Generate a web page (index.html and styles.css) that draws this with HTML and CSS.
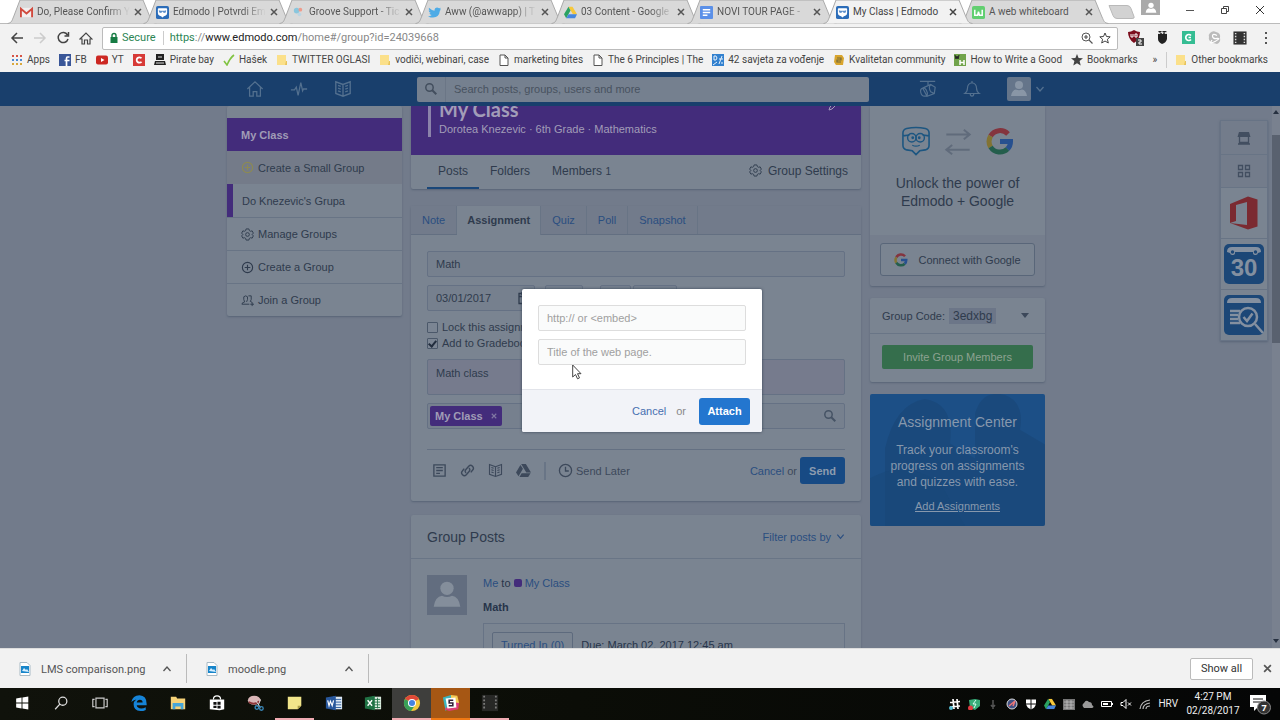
FILE: index.html
```html
<!DOCTYPE html>
<html lang="en">
<head>
<meta charset="utf-8">
<title>My Class | Edmodo</title>
<link rel="stylesheet" href="styles.css">
</head>
<body>
<svg class="defs" aria-hidden="true">
  <symbol id="tabshape" viewBox="0 0 150 24" preserveAspectRatio="none"><path d="M.5 23.500C5 23 5 20 6.500 17L13 0H136L143 17C145 21 145 23 149.500 23.500"/></symbol>
  <symbol id="x" viewBox="0 0 8 8"><path d="M1 1l6 6M7 1L1 7" fill="none" stroke="currentColor" stroke-width="1.500"/></symbol>
  <symbol id="folder" viewBox="0 0 12 12"><path d="M1 1h9v10H1z" fill="#fbe08a"/><path d="M10 7h1v4h-2z" fill="#e8c35d"/></symbol>
  <symbol id="page" viewBox="0 0 12 12"><path d="M2 1h5l3 3v7.500H2zM7 1v3h3" fill="#fff" stroke="#555"/></symbol>
  <symbol id="edmodo" viewBox="0 0 14 14"><rect width="14" height="14" rx="2" fill="#2b6cb8"/><path d="M3 2.500h8q1 0 1 1v4q0 2-2 3l-1.500.5L7 12.500 5.500 11 4 10.500q-2-1-2-3v-4q0-1 1-1z" fill="#fff"/><path d="M3 4.500l2 .5h4l2-.5-.5 2.500-2 .5L7 6l-1.500 1.500-2-.5z" fill="#5c8fcb"/></symbol>
  <symbol id="gear" viewBox="0 0 14 14"><path d="M5.500 1h3l.5 1.800 1.200.7 1.800-.4 1.300 2.400L12 7l1.300 1.500-1.300 2.400-1.800-.4-1.200.7-.5 1.800h-3L5 11.200l-1.200-.7-1.800.4L.7 8.500 2 7 .7 5.500 2 3.100l1.800.4L5 2.800z" fill="none" stroke="currentColor"/><circle cx="7" cy="7" r="2" fill="none" stroke="currentColor"/></symbol>
  <symbol id="plus" viewBox="0 0 14 14"><circle cx="7" cy="7" r="5.500" fill="none" stroke="currentColor" stroke-width="1.200"/><path d="M7 4v6M4 7h6" stroke="currentColor" stroke-width="1.200"/></symbol>
  <symbol id="book" viewBox="0 0 20 20"><path d="M10 5L2 2v13l8 3 8-3V2zM10 5v13M4.500 6l3 1.100M4.500 9l3 1.100M4.500 12l3 1.100M15.500 6l-3 1.100M15.500 9l-3 1.100M15.500 12l-3 1.100" fill="none" stroke="currentColor" stroke-width="1.500"/></symbol>
  <symbol id="search" viewBox="0 0 14 14"><circle cx="5.500" cy="5.500" r="3.700" fill="none" stroke="currentColor" stroke-width="1.500"/><path d="M8.300 8.300l4 4" stroke="currentColor" stroke-width="2"/></symbol>
  <symbol id="down" viewBox="0 0 10 10"><path d="M1.500 3l3.500 4 3.500-4" fill="none" stroke="currentColor" stroke-width="1.300"/></symbol>
  <symbol id="person" viewBox="0 0 24 24"><circle cx="12" cy="8" r="4" fill="currentColor"/><path d="M4 19q1-6 5-6.500q3 1.500 6 0q4 .5 5 6.500z" fill="currentColor"/></symbol>
  <symbol id="google" viewBox="0 0 28 28"><path d="M4.600 8.500A11 11 0 0 1 22 6.500" fill="none" stroke="#84343e" stroke-width="5"/><path d="M4.600 8.500a11 11 0 0 0 0 11" fill="none" stroke="#827333" stroke-width="5"/><path d="M4.600 19.500A11 11 0 0 0 21.500 21.500" fill="none" stroke="#245e4c" stroke-width="5"/><path d="M21.500 21.500Q24.500 18.500 24.500 14H14" fill="none" stroke="#27508f" stroke-width="5"/></symbol>
  <symbol id="drive" viewBox="0 0 16 14"><path d="M5.500 0h5L16 9h-5z" fill="#f7c83a"/><path d="M5.500 0L8 4.500 2.700 14 0 9z" fill="#2aa262"/><path d="M5.500 9H16l-2.500 5H2.700z" fill="#4687df"/></symbol>
  <symbol id="image" viewBox="0 0 12 14"><path d="M1 .5h7l3 3v10H1z" fill="#fff" stroke="#a8bac5"/><path d="M2 4h8v7H2z" fill="#1685ca"/><path d="M3 9l2-3 2 2 1-1 2 3" fill="#d5eeff"/></symbol>
  <symbol id="film" viewBox="0 0 20 20"><path d="M1 1h18v18H1z" fill="currentColor"/><path d="M3.500 2v16M16.500 2v16" stroke="#aaa" stroke-width="2" stroke-dasharray="2 2"/></symbol>
</svg>

<header class="browser">
  <div class="tabs">
    <div class="tab"><svg class="shape"><use href="#tabshape"/></svg><svg class="fav" viewBox="0 0 14 14"><path d="M0 2h14v10H0z" fill="#f2eeee"/><path d="M1 12V3l6 5 6-5v9" fill="none" stroke="#d14a3e" stroke-width="2"/></svg><span>Do, Please Confirm Y</span><button aria-label="Close tab"><svg><use href="#x"/></svg></button></div>
    <div class="tab"><svg class="shape"><use href="#tabshape"/></svg><svg class="fav"><use href="#edmodo"/></svg><span>Edmodo | Potvrdi Em</span><button aria-label="Close tab"><svg><use href="#x"/></svg></button></div>
    <div class="tab"><svg class="shape"><use href="#tabshape"/></svg><svg class="fav" viewBox="0 0 14 14"><circle cx="5" cy="5" r="3" fill="#8ac6dd"/><circle cx="9" cy="4" r="2" fill="#ef9b8b"/><circle cx="8" cy="9" r="2" fill="#bcd5e3"/></svg><span>Groove Support - Tic</span><button aria-label="Close tab"><svg><use href="#x"/></svg></button></div>
    <div class="tab"><svg class="shape"><use href="#tabshape"/></svg><svg class="fav" viewBox="0 0 14 14"><path d="M1 2q3 3 6 3 0-3.500 3-3.500l2 .8 2-.5-1.200 1.700 1.200.2-1.200 1.300Q12 12 5.500 12.500 3 12.500 0 11.200q2.500 0 4-1.400-2-.5-2.500-2L3 7.600Q.8 6.500.7 4.800l1.200.3Q.2 3.500 1 2z" fill="#4eabe6"/></svg><span>Aww (@awwapp) | T</span><button aria-label="Close tab"><svg><use href="#x"/></svg></button></div>
    <div class="tab"><svg class="shape"><use href="#tabshape"/></svg><svg class="fav"><use href="#drive"/></svg><span>03 Content - Google</span><button aria-label="Close tab"><svg><use href="#x"/></svg></button></div>
    <div class="tab"><svg class="shape"><use href="#tabshape"/></svg><svg class="fav" viewBox="0 0 14 14"><rect width="14" height="14" rx="1" fill="#5b90e8"/><path d="M3 4h8M3 7h8M3 10h5" stroke="#fff" stroke-width="1.500"/></svg><span>NOVI TOUR PAGE -</span><button aria-label="Close tab"><svg><use href="#x"/></svg></button></div>
    <div class="tab active"><svg class="shape"><use href="#tabshape"/></svg><svg class="fav"><use href="#edmodo"/></svg><span>My Class | Edmodo</span><button aria-label="Close tab"><svg><use href="#x"/></svg></button></div>
    <div class="tab whole"><svg class="shape"><use href="#tabshape"/></svg><svg class="fav" viewBox="0 0 14 14"><rect width="14" height="14" rx="2" fill="#62cf70"/><path d="M3 4v6h3l1-4 1 4h3V4" fill="none" stroke="#fff" stroke-width="1.600"/></svg><span>A web whiteboard</span><button aria-label="Close tab"><svg><use href="#x"/></svg></button></div>
    <button class="newtab" aria-label="New tab"><svg viewBox="0 0 28 14"><path d="M1 .5h18q3 0 4 3l3 8q1 2-2 2H9q-3 0-4-3z" fill="#d2d2d2" stroke="#b9b9b9"/></svg></button>
    <div class="winbtns">
      <button class="user" aria-label="Profile"><svg viewBox="0 0 24 24"><use href="#person"/></svg></button>
      <button aria-label="Minimize"><svg viewBox="0 0 10 10"><path d="M1 5.500h8" stroke="#555"/></svg></button>
      <button aria-label="Restore"><svg viewBox="0 0 10 10"><path d="M1.500 3.500h5v5h-5zM3.500 3V1.500h5v5H7" fill="none" stroke="#444"/></svg></button>
      <button aria-label="Close"><svg viewBox="0 0 10 10"><path d="M1 1l8 8M9 1L1 9" stroke="#333"/></svg></button>
    </div>
  </div>
  <div class="toolbar">
    <button aria-label="Back"><svg viewBox="0 0 14 14"><path d="M13 7H2M7 2L2 7l5 5" fill="none" stroke="#444" stroke-width="1.500"/></svg></button>
    <button aria-label="Forward"><svg viewBox="0 0 14 14"><path d="M1 7h11M7 2l5 5-5 5" fill="none" stroke="#ccc" stroke-width="1.500"/></svg></button>
    <button aria-label="Reload"><svg viewBox="0 0 14 14"><path d="M11.500 4A5 5 0 1 0 12 8M12.500 1v4h-4" fill="none" stroke="#444" stroke-width="1.500"/></svg></button>
    <button aria-label="Home"><svg viewBox="0 0 14 14"><path d="M1 8l6-6 6 6h-2v5H8.500V9h-3v4H3V8z" fill="none" stroke="#444" stroke-width="1.200"/></svg></button>
    <div class="url">
      <svg viewBox="0 0 10 12"><path d="M1.500 5h7v6h-7z" fill="#177c44"/><path d="M3 5V3.500a2 2 0 0 1 4 0V5" fill="none" stroke="#177c44" stroke-width="1.400"/></svg>
      <span class="secure">Secure</span>
      <span class="address"><b>https</b>://<i>www.edmodo.com</i>/home#/group?id=24039668</span>
      <svg class="r" viewBox="0 0 12 12"><circle cx="5" cy="5" r="4" fill="none" stroke="#555"/><path d="M8 8l3.500 3.500M3 5h4M5 3v4" stroke="#555" stroke-width="1.200"/></svg>
      <svg class="r" viewBox="0 0 12 12"><path d="M6 1l1.500 3.500 3.700.3-2.800 2.500.9 3.700L6 9l-3.300 2 .9-3.700L.8 4.800l3.700-.3z" fill="none" stroke="#444"/></svg>
    </div>
    <div class="exts">
      <svg viewBox="0 0 18 16"><path d="M7 0q3 2 6 2 0 7-6 11Q1 9 1 2q3 0 6-2z" fill="#7c0e1d"/><path d="M4 4v3h2V4M8 4h2v3H8z" stroke="#fff" fill="none"/><path d="M9 8h8v8H9z" fill="#444"/><path d="M11 10h3v2h-2v2h3" stroke="#fff" fill="none"/></svg>
      <svg viewBox="0 0 18 16"><path d="M5 1h9v8q-1 4-5 5-4-2-4-5z" fill="#222"/><path d="M5 1l2 2 2-2 2 2 3-2v3H5z" fill="#ddd"/><circle cx="8" cy="4" r="1" fill="#222"/><circle cx="11" cy="4" r="1" fill="#222"/></svg>
      <svg viewBox="0 0 18 16"><path d="M3 1h13v13H3z" fill="#35bd93"/><path d="M12 5.500a3 3 0 1 0 0 4M9.500 7.500H12" fill="none" stroke="#fff" stroke-width="1.700"/></svg>
      <svg viewBox="0 0 18 16"><path d="M5 3q3-3 6-1 5 1 4 6 1 4-3 6-3-1-5-1-4-3-3-6-1-2 1-4z" fill="#bbb"/><path d="M12 5.500Q7.500 3 7.500 6t4.500 2.500-2 3-3-1.500" fill="none" stroke="#fff" stroke-width="1.300"/></svg>
      <svg viewBox="0 0 22 22"><path d="M2 2h18v18H2z" fill="#333"/><path d="M5 4v15M17 4v15" stroke="#ddd" stroke-width="2" stroke-dasharray="2 2"/></svg>
      <svg viewBox="0 0 18 16"><path d="M9 2v2M9 7v2M9 12v2" stroke="#555" stroke-width="2"/></svg>
    </div>
  </div>
  <nav class="bookmarks">
    <a href="#"><svg viewBox="0 0 12 12"><path d="M1 2h10" stroke="#d65345" stroke-width="2" stroke-dasharray="2 2"/><path d="M1 6h10" stroke="#4a8ad6" stroke-width="2" stroke-dasharray="2 2"/><path d="M1 10h10" stroke="#d9a83d" stroke-width="2" stroke-dasharray="2 2"/></svg><span>Apps</span></a>
    <a href="#"><svg viewBox="0 0 12 12"><path d="M0 0h12v12H0z" fill="#395698"/><path d="M10.500 3H8.500Q7.500 3 7.500 4.500V12M5.500 6.500h5" fill="none" stroke="#fff" stroke-width="1.700"/></svg><span>FB</span></a>
    <a href="#"><svg viewBox="0 0 12 12"><rect y="1.500" width="12" height="9" rx="2" fill="#cc2722"/><path d="M5 4l3.500 2L5 8z" fill="#fff"/></svg><span>YT</span></a>
    <a href="#" aria-label="C"><svg viewBox="0 0 12 12"><path d="M0 0h12v12H0z" fill="#d73a37"/><path d="M8.500 4.300a2.700 2.700 0 1 0 0 3.400" fill="none" stroke="#fff" stroke-width="1.800"/></svg></a>
    <a href="#"><svg viewBox="0 0 12 12"><path d="M2 0h8v6H2zM1 7h10l1 4H0z" fill="#222"/><path d="M4 3h4M2 9h8" stroke="#ddd"/></svg><span>Pirate bay</span></a>
    <a href="#"><svg viewBox="0 0 12 12"><path d="M1 7l3 4Q7 4 11 1" fill="none" stroke="#80c342" stroke-width="1.600"/></svg><span>Hašek</span></a>
    <a href="#"><svg><use href="#folder"/></svg><span>TWITTER OGLASI</span></a>
    <a href="#"><svg><use href="#folder"/></svg><span>vodiči, webinari, case</span></a>
    <a href="#"><svg><use href="#page"/></svg><span>marketing bites</span></a>
    <a href="#"><svg><use href="#page"/></svg><span>The 6 Principles | The</span></a>
    <a href="#"><svg viewBox="0 0 12 12"><path d="M0 0h12v12H0z" fill="#3281cf"/><path d="M2 6V2h2q2 2 0 4zM7 10l3-8M1 11l4-3M7 5h4M9 9h2" fill="none" stroke="#e8f2fb"/></svg><span>42 savjeta za vođenje</span></a>
    <a href="#"><svg viewBox="0 0 12 12"><path d="M2 1h7l2 3-1 7H3L1 8z" fill="#d9a52d"/><path d="M4 4h4v2H4v2h4" stroke="#756c3c" fill="none" stroke-width="1.200"/></svg><span>Kvalitetan community</span></a>
    <a href="#"><svg viewBox="0 0 12 12"><path d="M0 0h12v12H0z" fill="#71a34b"/><path d="M1 1l1 4 1-3 1 3 1-4" fill="none" stroke="#222"/><path d="M6 6v5M10 6v5M6 8.500h4" stroke="#fff" stroke-width="1.500"/></svg><span>How to Write a Good</span></a>
    <a href="#"><svg viewBox="0 0 12 12"><path d="M6 0l1.600 4 4.400.3-3.400 2.800L9.700 11.500 6 9.200l-3.700 2.300 1.100-4.400L0 4.300 4.400 4z" fill="#444"/></svg><span>Bookmarks</span></a>
    <a class="more" href="#">»</a>
    <a class="other" href="#"><svg><use href="#folder"/></svg><span>Other bookmarks</span></a>
  </nav>
</header>

<main class="page">
  <header class="topbar">
    <div class="topbar-in">
      <nav class="topnav">
        <a href="#" aria-label="Home"><svg viewBox="0 0 20 20"><path d="M1.500 10L10 2l8.500 8M4 8v10h4v-5h4v5h4V8" fill="none" stroke="currentColor" stroke-width="1.400"/></svg></a>
        <a href="#" aria-label="Progress"><svg viewBox="0 0 20 20"><path d="M1 11h4l2-3 2 9 3-14 2 9 1-2h4" fill="none" stroke="currentColor" stroke-width="1.400"/></svg></a>
        <a href="#" aria-label="Library"><svg><use href="#book"/></svg></a>
      </nav>
      <form class="search"><button type="button" aria-label="Search"><svg><use href="#search"/></svg></button><input type="search" aria-label="Search Edmodo" placeholder="Search posts, groups, users and more"></form>
      <div class="account">
        <button aria-label="Launcher"><svg viewBox="0 0 20 20"><path d="M1 1.500h17M10 1.500v4M4 9l9-4 5 3-1 7-8 3zM4 9q-3 1-2 5t4 4l3 0q1-4-1-7t-4-2zM13 5q-3 3 0 8l4 2" fill="none" stroke="currentColor" stroke-width="1.300"/></svg></button>
        <button aria-label="Notifications"><svg viewBox="0 0 20 20"><path d="M2 15q3-2 3-6 0-5 5-6 5 1 5 6 0 4 3 6zM8 15q0 3 2 3t2-3M10 1v2" fill="none" stroke="currentColor" stroke-width="1.300"/></svg></button>
        <button class="me" aria-label="Account"><svg class="face"><use href="#person"/></svg><svg class="chev"><use href="#down"/></svg></button>
      </div>
    </div>
  </header>

  <div class="scroller">
    <div class="columns">
      <aside class="left card">
        <div class="cut"></div>
        <a class="current" href="#">My Class</a>
        <a class="small" href="#"><svg class="gold"><use href="#plus"/></svg>Create a Small Group</a>
        <a class="group" href="#">Do Knezevic's Grupa</a>
        <a class="row" href="#"><svg><use href="#gear"/></svg>Manage Groups</a>
        <a class="row" href="#"><svg><use href="#plus"/></svg>Create a Group</a>
        <a class="row" href="#"><svg viewBox="0 0 14 14"><path d="M1 11q0-2 3-2.500L3 6V3l2-1 2 1v3L6 8.500M8 2h3v4l-1 2 2 1M1 11h8M10 11h4M12 9v4" fill="none" stroke="currentColor"/></svg>Join a Group</a>
      </aside>

      <div class="middle">
        <section class="card banner">
          <div class="cover"><div class="cover-in"><h1>My Class</h1><p>Dorotea Knezevic · 6th Grade · Mathematics</p></div><svg class="edit" viewBox="0 0 10 10"><path d="M1 9l1-3 5-5 2 2-5 5z" fill="none" stroke="currentColor"/></svg></div>
          <nav class="grouptabs"><a class="on" href="#">Posts</a><a href="#">Folders</a><a href="#">Members <small>1</small></a><a class="settings" href="#"><svg><use href="#gear"/></svg>Group Settings</a></nav>
        </section>

        <section class="card composer">
          <nav class="kinds"><a href="#">Note</a><a class="on" href="#">Assignment</a><a href="#">Quiz</a><a href="#">Poll</a><a href="#">Snapshot</a></nav>
          <form class="fields">
            <input class="field" aria-label="Assignment title" value="Math">
            <div class="when"><div class="field date"><input aria-label="Due date" value="03/01/2017"><svg viewBox="0 0 14 14"><path d="M1 2.500h12v10H1zM1 5.500h12M4 1v3M10 1v3M4 8h2M8 8h2M4 10.500h2" fill="none" stroke="currentColor" stroke-width="1.300"/></svg></div><span class="field t1"></span><span class="field t2"></span><span class="field t3"></span></div>
            <div class="checks"><label><input type="checkbox">Lock this assignment after its due date</label><label><input type="checkbox" checked>Add to Gradebook</label></div>
            <textarea class="field desc" aria-label="Description">Math class</textarea>
            <div class="field to"><span class="chip">My Class <button type="button" aria-label="Remove"><svg><use href="#x"/></svg></button></span><svg class="mag"><use href="#search"/></svg></div>
            <footer class="actions">
              <button type="button" aria-label="Attach file"><svg viewBox="0 0 16 16"><path d="M2 2h12v12H2zM4.500 5h7M4.500 8h7M4.500 11h4" fill="none" stroke="currentColor" stroke-width="1.400"/></svg></button>
              <button type="button" aria-label="Attach link"><svg viewBox="0 0 16 16"><path d="M6.500 10.500q-2-1.500-.2-3.500l3-3.500q2-2 4 0t.2 4L11.500 10M9.500 5.500q2 1.500.2 3.500l-3 3.500q-2 2-4 0t-.2-4L4.500 6" fill="none" stroke="currentColor" stroke-width="1.500"/></svg></button>
              <button type="button" aria-label="Attach from Library"><svg><use href="#book"/></svg></button>
              <button type="button" aria-label="Attach from Drive"><svg viewBox="0 0 16 14"><path d="M5.500 0h5L16 9h-5zM4.700 1L7.400 5 2.700 13 0 9zM6 10h9.500L13 14H3.700z" fill="currentColor"/></svg></button>
              <button type="button" class="later"><svg viewBox="0 0 16 16"><circle cx="8" cy="8" r="6.500" fill="none" stroke="currentColor" stroke-width="1.400"/><path d="M8 4v4.500h3.500" fill="none" stroke="currentColor" stroke-width="1.400"/></svg>Send Later</button>
              <span class="end"><a href="#">Cancel</a> or</span><button type="button" class="primary dim">Send</button>
            </footer>
          </form>
        </section>

        <section class="card posts">
          <header><h2>Group Posts</h2><button>Filter posts by <svg><use href="#down"/></svg></button></header>
          <article><svg class="avatar" viewBox="0 0 24 24"><use href="#person"/></svg>
            <div class="post"><p><a href="#">Me</a> to <i></i> <a href="#">My Class</a></p><h3>Math</h3>
              <div class="work"><button>Turned In (0)</button><span>Due: March 02, 2017 12:45 am</span></div></div>
          </article>
        </section>
      </div>

      <aside class="right">
        <section class="card promo">
          <div class="promo-top">
            <div class="logos"><svg viewBox="0 0 30 32"><path d="M5 2Q15 0 25 2q4 1 4 5v13q0 4-4 5l-6 1-4 4-4-4-6-1q-4-1-4-5V7q0-4 4-5zM1 10l7-1M22 9l7 1" fill="none" stroke="#1d5681" stroke-width="1.700"/><circle cx="10.500" cy="12" r="4.500" fill="none" stroke="#1d5681" stroke-width="1.500"/><circle cx="19.500" cy="12" r="4.500" fill="none" stroke="#1d5681" stroke-width="1.500"/><circle cx="11.500" cy="12" r="1.500" fill="#1d5681"/><circle cx="18.500" cy="12" r="1.500" fill="#1d5681"/><path d="M11 20q4 2 8 0" fill="none" stroke="#1d5681" stroke-width="1.300"/></svg>
            <svg class="swap" viewBox="0 0 24 24"><path d="M2 6h20M17 2l5 4-5 4M22 19H2M7 15l-5 4 5 4" fill="none" stroke="#606b7b" stroke-width="1.700"/></svg>
            <svg><use href="#google"/></svg></div>
            <p>Unlock the power of<br>Edmodo + Google</p>
          </div>
          <button class="connect"><svg><use href="#google"/></svg>Connect with Google</button>
        </section>
        <section class="card code"><div class="coderow"><span>Group Code:</span><b>3edxbg</b><button aria-label="Code options"></button></div><button class="invite">Invite Group Members</button></section>
        <section class="center"><svg class="photo" viewBox="0 0 175 133" preserveAspectRatio="none"><path d="M15 133V55Q25 10 55 5q30 5 25 45l25 15V20Q112-5 135 1q20 8 15 35l25 15v82z" fill="#183f6b" opacity=".35"/><path d="M0 85q35-20 70 5l25 43H0z" fill="#174778" opacity=".5"/></svg><div><h2>Assignment Center</h2><p>Track your classroom's<br>progress on assignments<br>and quizzes with ease.</p><a href="#">Add Assignments</a></div></section>
      </aside>
    </div>
    <div class="scrollbar"><i class="up"></i><i class="thumb"></i><i class="dn"></i></div>

    <aside class="dock">
      <button class="s" aria-label="Store"><svg viewBox="0 0 14 14"><path d="M2 1h10l1.500 5h-13z" fill="currentColor"/><path d="M2.500 6v5.500h9V6M1 13h12" fill="none" stroke="currentColor" stroke-width="1.300"/></svg></button>
      <button class="s" aria-label="Apps"><svg viewBox="0 0 14 14"><path d="M1.500 1.500h4v4h-4zM8.500 1.500h4v4h-4zM1.500 8.500h4v4h-4zM8.500 8.500h4v4h-4z" fill="none" stroke="currentColor" stroke-width="1.300"/></svg></button>
      <button aria-label="Office"><svg viewBox="0 0 40 40"><path d="M6 11L24 3.500l9.500 3v27l-9.500 3L6 30l17 2V9L12 12v16l-6 2z" fill="#7b2a31"/></svg></button>
      <button aria-label="Planner"><svg viewBox="0 0 40 40"><rect width="40" height="40" rx="5" fill="#1c4777"/><path d="M3 8q0-5 5-5h24q5 0 5 5l-3 1a2.500 2.500 0 0 1-5-1H11a2.500 2.500 0 0 1-5 1z" fill="#8490a0"/><circle cx="8.500" cy="8" r="1.700" fill="#1c4777"/><circle cx="31.500" cy="8" r="1.700" fill="#1c4777"/><text x="20" y="32" text-anchor="middle">30</text></svg></button>
      <button aria-label="Snapshot"><svg viewBox="0 0 40 40"><rect width="40" height="40" rx="5" fill="#1c4777"/><path d="M3 8q0-5 5-5h24q5 0 5 5z" fill="#8490a0"/><circle cx="24" cy="22" r="9" fill="none" stroke="#8490a0" stroke-width="2.500"/><path d="M19.500 22l3.500 4 5.500-7.500M6 16h10M6 20h8M6 24h8M6 28h10M31 29l8 9" fill="none" stroke="#8490a0" stroke-width="2.500"/></svg></button>
    </aside>
  </div>

  <div class="overlay">
    <form class="modal" role="dialog" aria-label="Attach a link">
      <div class="modal-body"><input aria-label="Link" placeholder="http:// or &lt;embed&gt;"><input aria-label="Title" placeholder="Title of the web page."></div>
      <footer><a href="#">Cancel</a><span>or</span><button type="button" class="primary">Attach</button></footer>
      <svg class="cursor" viewBox="0 0 10 16"><path d="M.7 1v12l2.800-2.500 2 4.300 2-.9-2-4.200H9z" fill="#fff" stroke="#444"/></svg>
    </form>
  </div>
</main>

<section class="downloads">
  <div class="file"><svg><use href="#image"/></svg><span>LMS comparison.png</span><button aria-label="Options"><svg class="flip"><use href="#down"/></svg></button></div>
  <div class="file"><svg><use href="#image"/></svg><span>moodle.png</span><button aria-label="Options"><svg class="flip"><use href="#down"/></svg></button></div>
  <button class="showall">Show all</button><button class="dismiss" aria-label="Close downloads"><svg><use href="#x"/></svg></button>
</section>

<footer class="taskbar">
  <button aria-label="Start"><svg viewBox="0 0 20 20"><path d="M3.500 5l6-1v5.500h-6zM10.500 3.800l6.500-.9v6.600h-6.500zM3.500 10.500h6V16l-6-1zM10.500 10.500H17v6.600l-6.500-.9z" fill="#fff"/></svg></button>
  <button aria-label="Search"><svg viewBox="0 0 20 20"><circle cx="12" cy="8" r="4.500" fill="none" stroke="#ddd" stroke-width="1.400"/><path d="M9 11l-5.500 6" stroke="#ddd" stroke-width="1.400"/></svg></button>
  <button aria-label="Task view"><svg viewBox="0 0 20 20"><path d="M5.500 4.500h9v11h-9zM4 6H2v8h2M16 6h2v8h-2" fill="none" stroke="#ccc" stroke-width="1.300"/></svg></button>
  <button aria-label="Edge"><svg viewBox="0 0 20 20"><path d="M1.500 9Q3 1.500 10.500 1.500 18.500 2 18.500 11v1.500H7.500q.5 3.500 5 3.500 2.500 0 5-1.300v3q-2.500 1.300-6 1.300-7.500-.5-7.500-7.500 0-3.500 3-5.500-3.500.5-5.500 3zM7.500 9.500h6.500q0-3-3-3t-3.500 3z" fill="#1684d8"/></svg></button>
  <button aria-label="Explorer"><svg viewBox="0 0 20 20"><path d="M2 3h6l1 2h9v12H2z" fill="#f6d278"/><path d="M4 10h12v7h-3v-3H7v3H4z" fill="#46a6d9"/></svg></button>
  <button aria-label="Store"><svg viewBox="0 0 20 20"><path d="M2 6h16v11l-5 1-11-1z" fill="#fff"/><path d="M6 6q0-4 4-4t4 4" fill="none" stroke="#fff" stroke-width="1.300"/><path d="M6 9h3.500v3H6zM10.500 8.500H14V12h-3.500zM6 13h3.500v2.500H6zM10.500 13H14v3h-3.500z" fill="#111"/></svg></button>
  <button aria-label="Snipping tool"><svg viewBox="0 0 20 20"><ellipse cx="8" cy="7" rx="7" ry="5" fill="#d9b5b6"/><path d="M2 9q6 4 12-1" stroke="#8f3539" fill="none" stroke-width="2"/><path d="M10 8l5 7M15 6l-3 8" stroke="#ddd"/><circle cx="16" cy="16" r="2" fill="none" stroke="#3886b7" stroke-width="1.500"/><circle cx="11" cy="15" r="2" fill="none" stroke="#3886b7" stroke-width="1.500"/></svg></button>
  <button class="open" aria-label="Sticky notes"><svg viewBox="0 0 20 20"><path d="M2 3h15v10l-4 4H2z" fill="#f1e58a"/><path d="M17 13h-4v4z" fill="#a89d49"/></svg></button>
  <button aria-label="Word"><svg viewBox="0 0 20 20"><path d="M9 3h10v14H9z" fill="#dce8f4"/><path d="M11 6h7M11 9h7M11 12h7M11 15h7" stroke="#285a9d"/><path d="M1 4l11-2v16L1 16z" fill="#28579c"/><path d="M3 7l1.500 6L6 8l2 5 1.500-6" fill="none" stroke="#fff" stroke-width="1.300"/></svg></button>
  <button aria-label="Excel"><svg viewBox="0 0 20 20"><path d="M9 3h10v14H9z" fill="#dcecdf"/><path d="M11 6h7M11 9h7M11 12h7M11 15h7M15 4v12" stroke="#267449"/><path d="M1 4l11-2v16L1 16z" fill="#207244"/><path d="M4 7l5 6M9 7l-5 6" fill="none" stroke="#fff" stroke-width="1.500"/></svg></button>
  <button class="open lit" aria-label="Chrome"><svg viewBox="0 0 20 20"><circle cx="10" cy="10" r="9" fill="#f1c83b"/><path d="M10 10L2.200 5.500A9 9 0 0 1 17.800 5.500z" fill="#df4838"/><path d="M10 10L2.200 5.500A9 9 0 0 0 9 19l4-6z" fill="#389f58"/><circle cx="10" cy="10" r="4.500" fill="#fff"/><circle cx="10" cy="10" r="3.400" fill="#4583df"/></svg></button>
  <button class="slack" aria-label="Slack"><svg viewBox="0 0 20 20"><path d="M1 4l9-3 3 9-9 9z" fill="#3eb5bd"/><path d="M10 1l7 1 2 8-9 1z" fill="#f4cb56"/><path d="M3 17l8-8 8 1-1 7-10 2z" fill="#db3d77"/><path d="M4 5l11-1 1 11-10 1z" fill="#fff"/><path d="M12.500 7H8v3h4v3H7.500" fill="none" stroke="#312138" stroke-width="1.800"/></svg></button>
  <button class="open" aria-label="Video editor"><svg class="grey"><use href="#film"/></svg></button>
  <div class="tray">
    <svg viewBox="0 0 12 12"><path d="M4 1l1 10M8 1l1 10M1 4.500l10-1M1 9l10-1" stroke="#fff" stroke-width="1.700"/><circle cx="2" cy="10" r="2" fill="#55bdd3"/></svg>
    <svg viewBox="0 0 12 12"><path d="M1 2l6-1 5 1v6l-5 4-5-2z" fill="#38ad78"/><path d="M8 2L5 6h3l-2 4" fill="none" stroke="#d8fff0"/><circle cx="2.500" cy="10" r="2.500" fill="#e13c40"/></svg>
    <svg viewBox="0 0 12 12"><path d="M6 2v6M4 7q2 3 4 0M6 9v2" fill="none" stroke="#555" stroke-width="1.500"/></svg>
    <svg viewBox="0 0 12 12"><circle cx="6" cy="6" r="5" fill="#405184" stroke="#ddd"/><path d="M3 8l6-5-2 5" fill="none" stroke="#e77" stroke-width="1.500"/></svg>
    <svg viewBox="0 0 12 12"><path d="M1 1.500h10V6q-1 4-5 5.500Q2 10 1 6z" fill="#fff"/><path d="M6 1v11M1 6h10" stroke="#111"/></svg>
    <svg viewBox="0 0 16 14"><use href="#drive"/></svg>
    <svg viewBox="0 0 12 12"><path d="M0 1h12v11H0z" fill="#777"/><path d="M1 4h10M1 7h10M1 10h10M4 2v9M8 2v9" stroke="#ccc" stroke-width=".7"/></svg>
    <svg viewBox="0 0 12 12"><path d="M2 10Q-1 7 2 5q2-4 5-1 3 0 3 3 3 2 0 3z" fill="#999"/></svg>
    <svg viewBox="0 0 12 12"><path d="M.5 3.500h10v5H.5z" fill="none" stroke="#fff"/><path d="M2 5h5v2H2zM11 5h1v2h-1z" fill="#fff"/></svg>
    <svg viewBox="0 0 12 12"><path d="M1 4.500h2l3-3v9l-3-3H1zM8 4.500l3 3M11 4.500l-3 3" fill="none" stroke="#fff"/></svg>
    <svg viewBox="0 0 12 12"><path d="M1 11Q2 3 11 2M4 11Q4 6 11 5M7 11q0-3 4-3" fill="none" stroke="#bbb" stroke-width="1.200"/></svg>
    <span>HRV</span>
    <div class="clock">4:27 PM<br>02/28/2017</div>
    <svg class="notes" viewBox="0 0 24 22"><path d="M2 2h16v12h-8l-4 4v-4H2z" fill="#fff"/><path d="M5 6h10M5 9h10" stroke="#111"/><circle cx="16" cy="14.500" r="6.500" fill="#333" stroke="#888"/><text x="16" y="18" text-anchor="middle">7</text></svg>
  </div>
</footer>
</body>
</html>
```

FILE: styles.css
```css
* { box-sizing: border-box; }
body { margin: 0; height: 100vh; display: flex; flex-direction: column; overflow: hidden; font: 11px/16px "Liberation Sans", Arial, sans-serif; color: #2f3b4d; }
h1, h2, h3, p { margin: 0; font-weight: 400; }
a { color: inherit; text-decoration: none; }
button { border: 0; padding: 0; margin: 0; background: none; font: inherit; color: inherit; display: flex; align-items: center; justify-content: center; }
input, textarea { font: inherit; color: inherit; margin: 0; min-width: 0; }
svg { display: block; flex: none; }
.defs { position: absolute; width: 0; height: 0; }

/* browser chrome */
.browser { flex: none; background: #f2f2f2; font-family: Roboto, "Open Sans", sans-serif; font-size: 10px; color: #444; }
.tabs { height: 24px; display: flex; background: #fff; padding-left: 7px; box-shadow: inset 0 -1px #bbb; }
.tab { position: relative; flex: 0 1 150px; min-width: 0; margin-right: -14px; padding: 0 16px 0 13px; display: flex; align-items: center; gap: 4px; color: #555; }
.tab .shape { position: absolute; inset: 0; width: 100%; height: 100%; fill: #d9d9d9; stroke: #aaa; }
.tab.active { z-index: 1; color: #444; }
.tab.active .shape { fill: #f2f2f2; }
.tab .fav { position: relative; width: 13px; height: 13px; }
.tab span { position: relative; flex: 1; white-space: nowrap; mask-image: linear-gradient(90deg, #000 75%, transparent); }
.tab.active span, .tab.whole span { mask-image: none; }
.tab button { position: relative; width: 8px; }
.tab button svg { width: 8px; height: 8px; }
.newtab { margin-left: 13px; }
.newtab svg { width: 28px; height: 14px; }
.winbtns { margin-left: auto; display: flex; align-items: center; gap: 25px; padding-right: 15px; height: 20px; }
.winbtns svg { width: 10px; height: 10px; }
.winbtns .user { width: 19px; height: 15px; background: #aaa; color: #fff; align-self: flex-start; }
.winbtns .user svg { width: 16px; height: 16px; }
.toolbar { height: 26px; display: flex; align-items: center; padding: 2px 0 0 10px; gap: 9px; }
.toolbar > button svg { width: 14px; height: 14px; }
.url { flex: 1; min-width: 0; height: 23px; display: flex; align-items: center; background: #fff; border: 1px solid #bbb; border-radius: 2px; padding: 0 6px; font-size: 11px; }
.url svg { width: 10px; height: 12px; }
.url svg.r { width: 12px; height: 12px; margin-left: 6px; }
.secure { color: #2c8554; margin-left: 3px; padding-right: 7px; border-right: 1px solid #ccc; line-height: 14px; }
.address { color: #888; margin: 0 auto 0 6px; }
.address b { font-weight: 400; color: #2c8554; }
.address i { font-style: normal; color: #222; }
.exts { display: flex; gap: 8px; padding: 0 5px 0 0; }
.exts svg { width: 18px; height: 16px; }
.bookmarks { height: 22px; display: flex; align-items: center; gap: 9px; padding: 0 12px 2px 11px; white-space: nowrap; color: #444; }
.bookmarks a { display: flex; align-items: center; gap: 4px; flex: none; }
.bookmarks svg { width: 12px; height: 12px; }
.bookmarks .more { margin-left: auto; }
.bookmarks .other { border-left: 1px solid #ccc; padding-left: 8px; }

/* page */
.page { flex: 1; min-height: 0; display: flex; flex-direction: column; position: relative; background: #727b8b; }
.topbar { flex: none; background: #193f6c; color: #53708f; padding-right: 8px; }
.topbar-in { width: 818px; max-width: 100%; margin: 0 auto; height: 34px; display: flex; align-items: center; }
.topnav { display: flex; gap: 26px; padding-left: 19px; width: 190px; }
.topnav svg { width: 18px; height: 18px; }
.search { flex: 1; height: 25px; display: flex; background: #75808f; border-radius: 2px; color: #434e5e; }
.search button { width: 29px; border-right: 1px solid #6b7686; }
.search button svg { width: 14px; height: 14px; }
.search input { flex: 1; border: 0; background: none; padding: 0 8px; }
.search input::placeholder { color: #48525f; opacity: 1; }
.account { display: flex; align-items: center; gap: 26px; padding-left: 50px; width: 176px; }
.account svg { width: 18px; height: 18px; }
.account .me { gap: 4px; }
.account .me .face { width: 24px; height: 24px; background: #65758a; color: #8996a6; border-radius: 2px; }
.account .me .chev { width: 10px; height: 10px; }
.scroller { flex: 1; min-height: 0; overflow: hidden; position: relative; display: flex; }
.columns { flex: 1; display: grid; grid-template-columns: 175px 450px 175px; gap: 9px; justify-content: center; align-items: start; }
.card { background: #7a8491; border-radius: 2px; box-shadow: 0 1px 2px #586477; }
.left a { display: flex; align-items: center; gap: 4px; height: 33px; padding-left: 14px; }
.left svg { width: 13px; height: 13px; }
.left .cut { height: 12px; }
.left .current { background: #432c7b; color: #a09cb6; font-weight: 700; }
.left .small { background: #747b89; }
.left .gold { color: #8d8a52; }
.left .group { border-left: 6px solid #432c7b; padding-left: 9px; }
.left .row { border-top: 1px solid #687485; }
.cover { height: 49px; background: #432c7b; color: #a29db8; display: flex; justify-content: space-between; padding: 0 23px 18px 17px; }
.cover-in { align-self: flex-end; border-left: 3px solid #8b83aa; padding-left: 8px; }
.cover h1 { font: 700 20px/24px Lato, sans-serif; }
.edit { width: 10px; height: 10px; margin-top: -5px; }
.grouptabs { display: flex; padding: 0 13px 0 16px; height: 34px; font-size: 12px; }
.grouptabs a { padding: 8px 11px 0; }
.grouptabs .on { border-bottom: 2px solid #1a4779; }
.grouptabs small { font-size: 10px; }
.grouptabs .settings { margin-left: auto; padding-right: 0; display: flex; gap: 6px; }
.settings svg { width: 13px; height: 13px; margin-top: 1px; }
.composer { margin-top: 17px; }
.kinds { display: flex; height: 29px; background: #727b8b; border-bottom: 1px solid #636f81; color: #2a4e80; }
.kinds a { padding: 6px 11px; border-right: 1px solid #687485; height: 28px; }
.kinds .on { background: #7a8491; color: #2f3b4d; font-weight: 700; height: 29px; padding: 6px 10px; }
.fields { padding: 16px 16px 17px; }
.field { display: block; width: 100%; height: 26px; border: 1px solid #657184; border-radius: 2px; background: #76808e; padding: 0 8px; }
.when { display: flex; margin: 8px 0; }
.when .date { width: 108px; display: flex; align-items: center; padding-right: 2px; }
.date input { flex: 1; border: 0; background: none; padding: 0; }
.date svg { width: 14px; height: 14px; }
.when .t1 { width: 38px; margin-left: 10px; }
.when .t2 { width: 31px; margin-left: 17px; }
.when .t3 { width: 44px; margin-left: 2px; }
.checks label { display: flex; align-items: center; gap: 4px; height: 16px; }
.checks input { appearance: none; width: 11px; height: 11px; border: 1px solid #4b586a; border-radius: 1px; background: #7b8593; display: grid; place-items: center; }
.checks input:checked::after { content: ""; width: 3px; height: 6px; border: solid #222d3e; border-width: 0 2px 2px 0; transform: rotate(40deg); }
.desc { height: 36px; resize: none; overflow: hidden; margin: 8px 0; padding-top: 5px; background: #767b8d; }
.to { display: flex; align-items: center; justify-content: space-between; padding: 2px 7px 2px 2px; }
.chip { background: #432c7b; color: #a09cb6; font-weight: 700; height: 20px; padding: 0 5px; border-radius: 2px; display: flex; align-items: center; gap: 8px; }
.chip svg { width: 6px; height: 6px; color: #8178a3; }
.mag { width: 14px; height: 14px; color: #465365; }
.actions { display: flex; align-items: center; margin-top: 20px; padding: 7px 0 0 5px; border-top: 1px solid #647082; color: #3d495b; }
.actions button:not(.primary) { margin-right: 13px; }
.actions svg { width: 15px; height: 15px; }
.actions .later { gap: 3px; border-left: 2px solid #697586; padding-left: 12px; height: 18px; }
.actions .end { margin: 0 3px 0 auto; }
.actions .end a { color: #2a4e80; }
.primary { background: #2376cf; color: #fff; font-weight: 700; border-radius: 3px; width: 51px; height: 27px; }
.primary.dim { background: #174a84; color: #8d9caf; width: 45px; }
.posts { margin-top: 14px; }
.posts header { display: flex; justify-content: space-between; align-items: center; height: 44px; padding: 0 16px; border-bottom: 1px solid #697586; }
.posts h2 { font-size: 14px; }
.posts header button { color: #2a4e80; gap: 5px; }
.posts header svg { width: 9px; height: 9px; }
.posts article { display: flex; gap: 16px; padding: 16px; }
.avatar { width: 40px; height: 40px; background: #626d7f; color: #848e9b; }
.post { flex: 1; color: #27344a; }
.post a { color: #2a4e80; }
.post i { display: inline-block; width: 8px; height: 8px; background: #432c7b; border-radius: 2px; }
.post h3 { font: inherit; font-weight: 700; margin: 8px 0; }
.work { border: 1px solid #677385; padding: 8px; display: flex; gap: 8px; align-items: center; }
.work button { border: 1px solid #5d6a7d; border-radius: 2px; height: 26px; padding: 0 8px; color: #2a4e80; }
.right { display: grid; gap: 12px; }
.promo { padding-bottom: 10px; background: #757e8d; }
.promo-top { background: #7a8491; padding: 19px 10px 25px; text-align: center; font-size: 14px; line-height: 18px; height: 129px; }
.logos { display: flex; align-items: center; justify-content: center; gap: 14px; height: 32px; margin-bottom: 17px; }
.logos svg { width: 28px; height: 31px; }
.connect { width: 155px; height: 33px; margin: 8px auto 0; border: 1px solid #596679; border-radius: 3px; background: #7a8491; gap: 10px; }
.connect svg { width: 14px; height: 14px; }
.coderow { display: flex; align-items: center; height: 36px; padding: 0 16px 0 12px; border-bottom: 1px solid #697586; }
.coderow b { font-weight: 400; background: #6c7688; padding: 0 4px; margin-left: 4px; font-size: 12px; }
.coderow button { margin-left: auto; border: 4px solid transparent; border-top: 5px solid #3c485a; border-bottom: 0; }
.code { padding-bottom: 13px; }
.invite { width: 151px; height: 24px; margin: 11px auto 0; border-radius: 2px; background: #356e4c; color: #8da291; }
.center { position: relative; overflow: hidden; background: #1c4f86; color: #8798ad; border-radius: 2px; text-align: center; padding: 19px 0 12px; font-size: 12px; }
.photo { position: absolute; inset: 0; width: 100%; height: 100%; }
.center div { position: relative; }
.center h2 { font-size: 14px; line-height: 18px; margin-bottom: 11px; }
.center a { display: block; margin-top: 8px; font-size: 11px; text-decoration: underline; }
.scrollbar { width: 8px; background: #79818f; display: flex; flex-direction: column; align-items: center; padding-top: 4px; }
.up { border: 3px solid transparent; border-bottom: 4px solid #263040; border-top: 0; margin-bottom: 21px; }
.thumb { width: 8px; height: 208px; background: #59616f; }
.dn { margin: auto 0 5px; border: 3px solid transparent; border-top: 4px solid #263040; border-bottom: 0; }
.dock { position: absolute; right: 12px; top: 14px; width: 48px; background: #7a8491; border: 1px solid #677385; box-shadow: 0 1px 2px #586477; }
.dock button { width: 100%; height: 51px; border-top: 1px solid #687485; }
.dock svg { width: 40px; height: 40px; }
.dock .s { height: 33px; background: #737c8b; color: #424e60; }
.dock button:first-child { border-top: 0; }
.dock .s svg { width: 14px; height: 14px; }
.dock text { font: 700 24px "Liberation Sans", sans-serif; fill: #8490a0; }

/* attach-link dialog */
.overlay { position: absolute; inset: 0; display: flex; justify-content: center; align-items: flex-start; padding: 217px 0 0 4px; }
.modal { position: relative; width: 240px; background: #fff; border-radius: 2px; box-shadow: 0 0 3px #354154; overflow: hidden; }
.modal-body { padding: 16px 16px 24px; display: grid; gap: 8px; }
.modal input { height: 26px; border: 1px solid #ddd; border-radius: 2px; padding: 0 8px; background: #fafbfb; }
.modal input::placeholder { color: #a0a0a0; opacity: 1; }
.modal footer { background: #f2f3f8; border-top: 1px solid #e2e4ea; height: 43px; display: flex; align-items: center; justify-content: flex-end; padding: 0 12px; color: #888; }
.modal footer a { color: #476fb0; }
.modal footer span { margin: 0 13px 0 10px; }
.cursor { position: absolute; left: 50px; top: 75px; width: 10px; height: 16px; }

/* downloads and taskbar */
.downloads { flex: none; height: 40px; background: #f2f2f2; border-top: 1px solid #ddd; display: flex; align-items: center; padding-right: 8px; font-family: Roboto, "Open Sans", sans-serif; color: #555; }
.file { flex: 0 1 182px; display: flex; align-items: center; height: 29px; border-right: 1px solid #bbb; padding: 0 14px 0 19px; gap: 10px; }
.file:first-child { flex-basis: 187px; }
.file svg { width: 12px; height: 14px; }
.file span { padding-top: 3px; white-space: nowrap; }
.file button { margin-left: auto; }
.file .flip { width: 10px; height: 10px; transform: rotate(180deg); }
.showall { margin-left: auto; width: 63px; height: 22px; background: #fff; border: 1px solid #bbb; border-radius: 2px; color: #333; }
.dismiss { margin-left: 10px; }
.dismiss svg { width: 9px; height: 9px; }
.taskbar { flex: none; height: 32px; background: linear-gradient(90deg, #10120b, #0b0d07 45%, #050606); display: flex; padding-left: 2px; color: #eee; font-family: Roboto, "Open Sans", sans-serif; }
.taskbar button { width: 39px; border-bottom: 2px solid transparent; }
.taskbar button svg { width: 18px; height: 18px; }
.taskbar .open { border-color: #efabb2; }
.taskbar .lit { background: #3e3e3c; }
.taskbar .slack { background: #a65714; border-color: #f07914; }
.taskbar .grey { color: #333; opacity: .7; }
.tray { margin-left: auto; display: flex; align-items: center; gap: 7px; padding-right: 8px; font-size: 10px; }
.tray svg { width: 12px; height: 12px; }
.clock { text-align: center; line-height: 14px; width: 56px; }
.tray .notes { width: 24px; height: 22px; }
.notes text { font: 700 9px "Open Sans", sans-serif; fill: #fff; }
```
